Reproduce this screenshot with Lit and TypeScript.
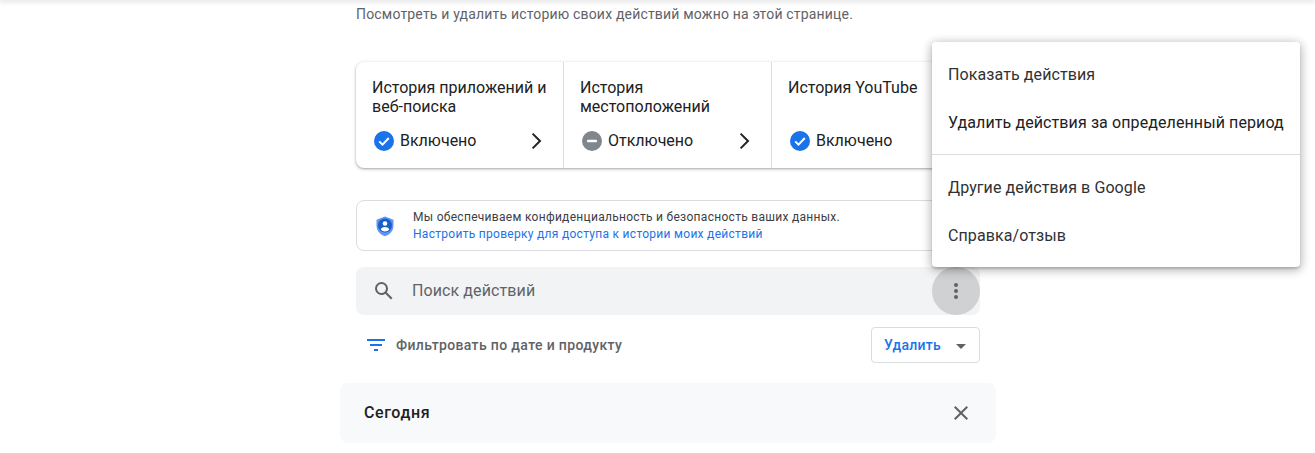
import { LitElement, html, css } from "lit";
import { customElement } from "lit/decorators.js";

const check = html`<svg class="st" viewBox="0 0 20 20"><circle cx="10" cy="10" r="10" fill="#1a73e8"/><path d="M5.2 10.4l3.3 3.2 6.3-6.6" fill="none" stroke="#fff" stroke-width="2"/></svg>`;
const minus = html`<svg class="st" viewBox="0 0 20 20"><circle cx="10" cy="10" r="10" fill="#80868b"/><rect x="5" y="8.8" width="10" height="2.4" rx="1" fill="#fff"/></svg>`;
const chev = html`<svg class="chev" viewBox="0 0 24 24"><path d="M8.6 4.6L16 12l-7.4 7.4" fill="none" stroke="#202124" stroke-width="2"/></svg>`;

@customElement("app-root")
export class AppRoot extends LitElement {
  static styles = css`
    :host { display: block; position: relative; width: 1315px; height: 453px; overflow: hidden; background: #fff; font-family: Roboto, "Liberation Sans", sans-serif; color: #202124; }
    .topbar { height: 0; box-shadow: 0 0 5px 1px rgba(60,64,67,.3); }
    .col { width: 624px; margin-left: 356px; display: flex; flex-direction: column; }
    .intro { font-size: 14px; line-height: 20px; color: #5f6368; margin-top: 4px; letter-spacing: .18px; }
    .cards { margin-top: 38px; height: 106px; display: flex; border-radius: 8px; box-shadow: 0 1px 2px rgba(60,64,67,.3), 0 1px 3px 1px rgba(60,64,67,.15); }
    .card { width: 208px; box-sizing: border-box; padding: 16px 16px 0; display: flex; flex-direction: column; border-left: 1px solid #dadce0; }
    .card:first-child { border-left: none; width: 207px; }
    .card-title { font-size: 16px; line-height: 19px; height: 40px; }
    .state { display: flex; align-items: center; margin-top: 11px; font-size: 16px; line-height: 24px; }
    .st { width: 20px; height: 20px; margin: 0 6px 0 2px; flex: none; }
    .chev { width: 24px; height: 24px; margin-left: auto; margin-right: -1px; }
    .privacy { margin-top: 32px; height: 51px; box-sizing: border-box; border: 1px solid #dadce0; border-radius: 8px; display: flex; align-items: center; padding-left: 16px; }
    .shield { width: 24px; height: 24px; margin-right: 16px; flex: none; }
    .ptext { font-size: 12px; line-height: 17px; letter-spacing: .29px; color: #3c4043; }
    .ptext a { display: block; color: #1a73e8; }
    .search { margin-top: 16px; height: 48px; background: #f1f3f4; border-radius: 8px; display: flex; align-items: center; padding-left: 16px; }
    .search svg.mag { width: 24px; height: 24px; margin-right: 16px; }
    .search span { font-size: 16px; line-height: 24px; color: #5f6368; letter-spacing: .1px; }
    .more { margin-left: auto; width: 48px; height: 48px; border-radius: 50%; background: #d0d1d2; display: flex; align-items: center; justify-content: center; }
    .more svg { width: 24px; height: 24px; }
    .filter { margin-top: 12px; height: 36px; display: flex; align-items: center; padding-left: 8px; }
    .filter svg { width: 24px; height: 24px; margin-right: 8px; }
    .filter span { font-size: 14px; font-weight: 500; color: #5f6368; letter-spacing: .36px; }
    .del { margin-left: auto; width: 109px; height: 36px; box-sizing: border-box; border: 1px solid #dadce0; border-radius: 4px; display: flex; align-items: center; padding-left: 12px; color: #1a73e8; font-size: 14px; font-weight: 500; letter-spacing: .25px; }
    .del svg { width: 24px; height: 24px; margin-left: auto; margin-right: 6px; }
    .today { margin: 20px 0 0 340px; width: 656px; height: 60px; box-sizing: border-box; background: #f8f9fa; border-radius: 8px; display: flex; align-items: center; padding: 0 23px 0 24px; font-size: 16px; font-weight: 500; letter-spacing: .6px; }
    .today span { line-height: 24px; padding-bottom: 1px; }
    .today svg { width: 24px; height: 24px; margin-left: auto; }
    .menu { position: absolute; left: 932px; top: 42px; width: 368px; height: 225px; box-sizing: border-box; padding: 8px 0; background: #fff; border-radius: 4px; box-shadow: 0 2px 2px rgba(0,0,0,.14), 0 1px 8px 2px rgba(0,0,0,.12), 0 3px 12px rgba(0,0,0,.2); font-size: 16px; letter-spacing: .1px; color: #303134; }
    .item { height: 48px; display: flex; align-items: center; padding-left: 16px; white-space: nowrap; }
    .item.hover { color: #202124; }
    .sep { height: 1px; background: #dadce0; margin: 8px 0; }
  `;

  render() {
    return html`
      <div class="topbar"></div>
      <div class="col">
        <div class="intro">Посмотреть и удалить историю своих действий можно на этой странице.</div>
        <div class="cards">
          <div class="card"><div class="card-title">История приложений и веб-поиска</div><div class="state">${check}Включено${chev}</div></div>
          <div class="card"><div class="card-title">История местоположений</div><div class="state">${minus}Отключено${chev}</div></div>
          <div class="card"><div class="card-title">История YouTube</div><div class="state">${check}Включено${chev}</div></div>
        </div>
        <div class="privacy">
          <svg class="shield" viewBox="0 0 24 24"><path d="M12 2.500l8.500 3.200v6c0 5-3.500 9-8.500 10.500C7 20.700 3.500 16.700 3.500 11.700v-6z" fill="#5e97f6"/><circle cx="12" cy="11.500" r="7" fill="#1a5fc4"/><circle cx="12" cy="9.500" r="2.300" fill="#fff"/><path d="M7.700 15.200c.8-1.500 2.600-2.200 4.300-2.200s3.500.7 4.300 2.200c-1 1.300-2.500 2.300-4.300 2.300s-3.300-1-4.300-2.300z" fill="#fff"/></svg>
          <div class="ptext">Мы обеспечиваем конфиденциальность и безопасность ваших данных.<a>Настроить проверку для доступа к истории моих действий</a></div>
        </div>
        <div class="search">
          <svg class="mag" viewBox="0 0 24 24"><path fill="#5f6368" d="M20.490 19l-5.730-5.730C15.530 12.200 16 10.910 16 9.500A6.500 6.500 0 1 0 9.500 16c1.410 0 2.700-.47 3.770-1.240L19 20.490 20.490 19zM5 9.500C5 7.010 7.010 5 9.500 5S14 7.010 14 9.500 11.990 14 9.500 14 5 11.990 5 9.500z"/></svg>
          <span>Поиск действий</span>
          <div class="more"><svg viewBox="0 0 24 24"><g fill="#5f6368"><circle cx="12" cy="6" r="2"/><circle cx="12" cy="12" r="2"/><circle cx="12" cy="18" r="2"/></g></svg></div>
        </div>
        <div class="filter">
          <svg viewBox="0 0 24 24"><path fill="#1a73e8" d="M3 6h18v2H3zM6 11h12v2H6zM10 16h4v2h-4z"/></svg>
          <span>Фильтровать по дате и продукту</span>
          <div class="del">Удалить<svg viewBox="0 0 24 24"><path fill="#5f6368" d="M7 11l5 5 5-5z"/></svg></div>
        </div>
      </div>
      <div class="today"><span>Сегодня</span><svg viewBox="0 0 24 24"><path fill="#5f6368" d="M19 6.410L17.590 5 12 10.590 6.410 5 5 6.410 10.590 12 5 17.590 6.410 19 12 13.410 17.590 19 19 17.590 13.410 12z"/></svg></div>
      <div class="menu">
        <div class="item">Показать действия</div>
        <div class="item hover">Удалить действия за определенный период</div>
        <div class="sep"></div>
        <div class="item">Другие действия в Google</div>
        <div class="item">Справка/отзыв</div>
      </div>
    `;
  }
}
